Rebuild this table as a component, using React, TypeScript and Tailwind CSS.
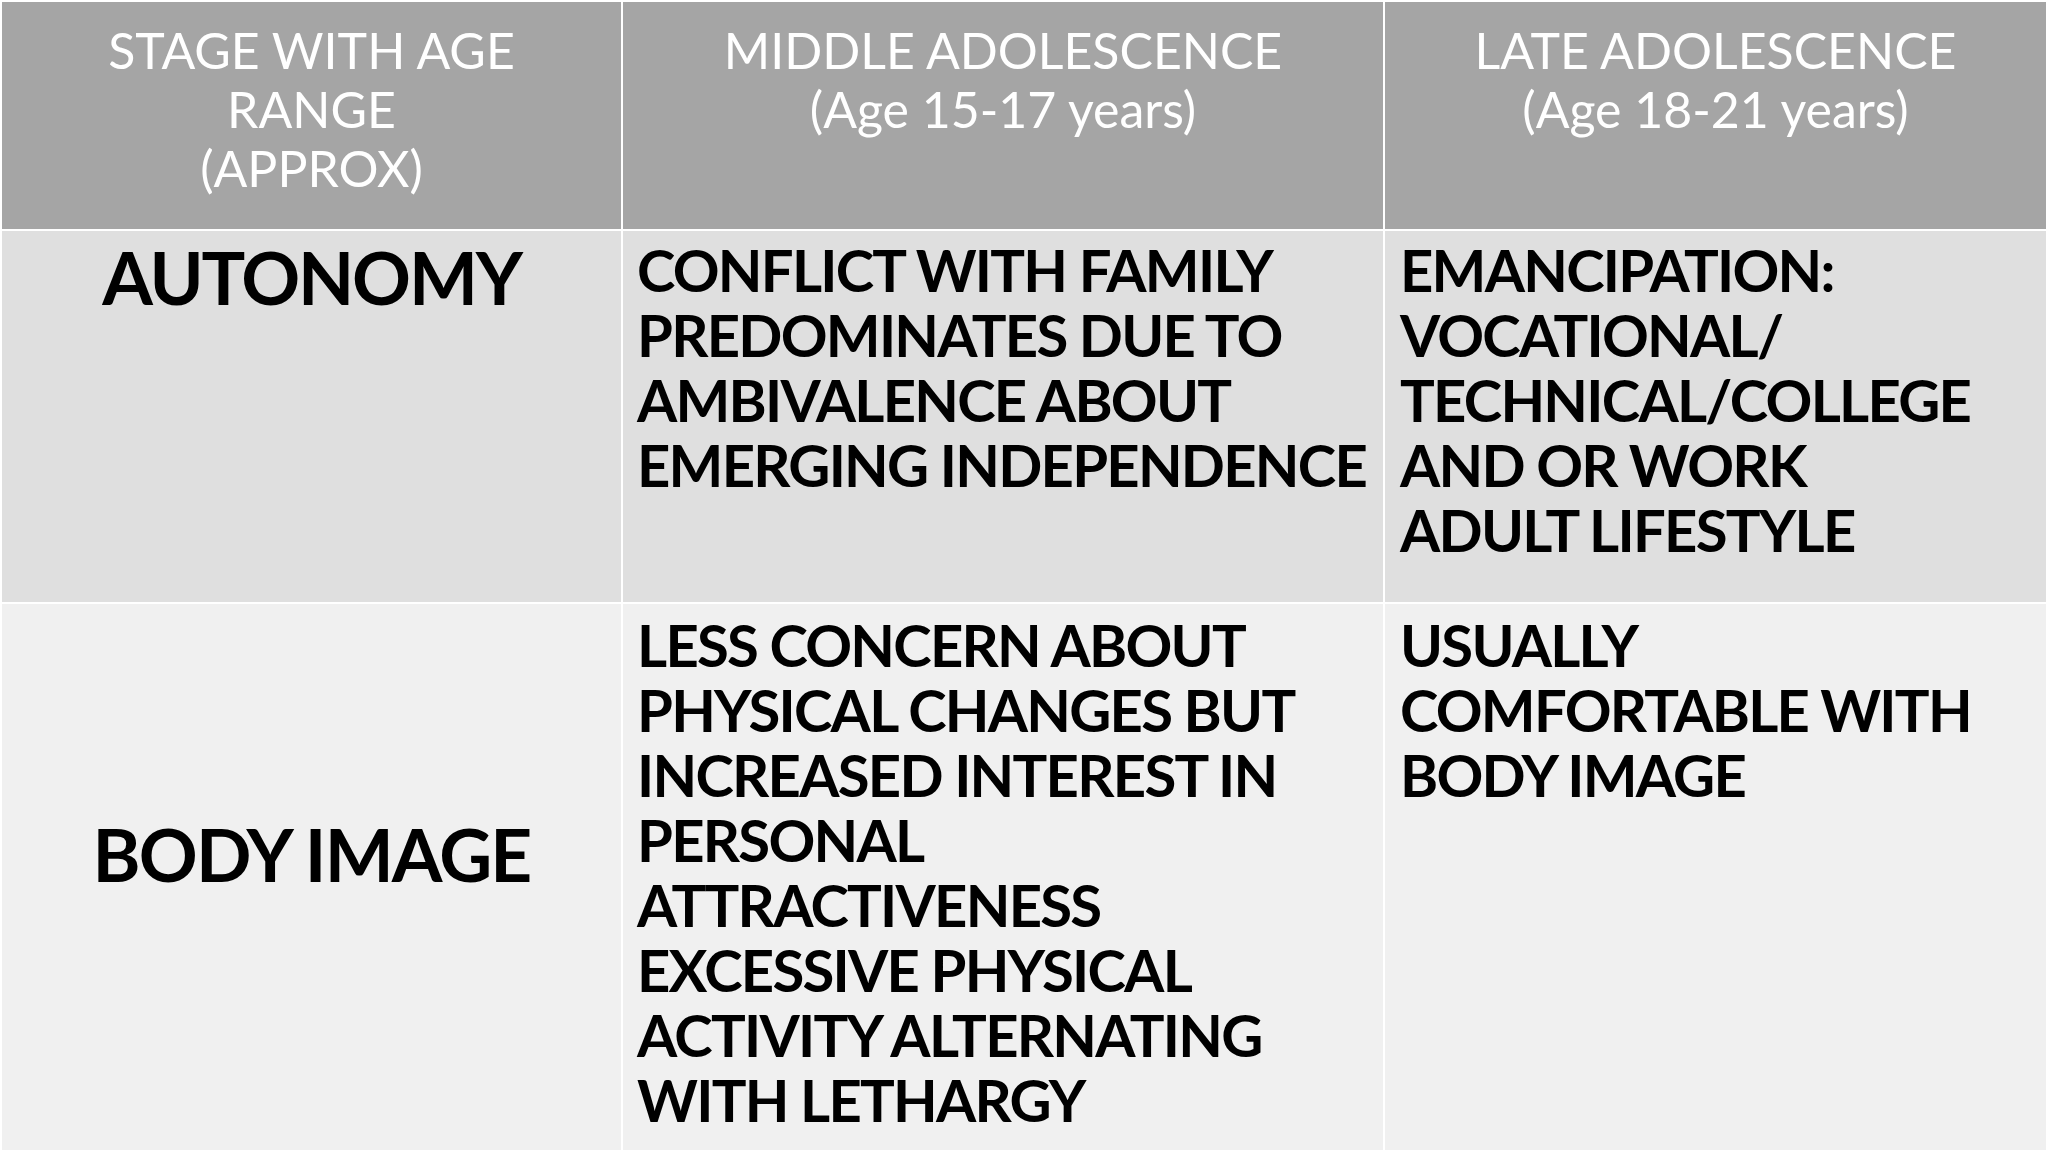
import React from 'react'

// Adolescence stages table (middle vs late)

const headers = [
  ['STAGE WITH AGE', 'RANGE', '(APPROX)'],
  ['MIDDLE ADOLESCENCE', '(Age 15-17 years)'],
  ['LATE ADOLESCENCE', '(Age 18-21 years)'],
]

const rows = [
  {
    label: 'AUTONOMY',
    middle: [
      'CONFLICT WITH FAMILY',
      'PREDOMINATES DUE TO',
      'AMBIVALENCE ABOUT',
      'EMERGING INDEPENDENCE',
    ],
    late: [
      'EMANCIPATION:',
      'VOCATIONAL/',
      'TECHNICAL/COLLEGE',
      'AND OR WORK',
      'ADULT LIFESTYLE',
    ],
  },
  {
    label: 'BODY IMAGE',
    middle: [
      'LESS CONCERN ABOUT',
      'PHYSICAL CHANGES BUT',
      'INCREASED INTEREST IN',
      'PERSONAL',
      'ATTRACTIVENESS',
      'EXCESSIVE PHYSICAL',
      'ACTIVITY ALTERNATING',
      'WITH LETHARGY',
    ],
    late: ['USUALLY', 'COMFORTABLE WITH', 'BODY IMAGE'],
  },
]

function Lines({ lines }: { lines: string[] }) {
  return (
    <>
      {lines.map((l, i) => (
        <div key={i} className="whitespace-nowrap">
          {l}
        </div>
      ))}
    </>
  )
}

export default function App() {
  return (
    <div
      className="h-[1152px] w-[2048px] overflow-hidden bg-white p-[2px]"
      style={{ fontFamily: 'Lato, "Open Sans", sans-serif' }}
    >
      <div className="grid h-full grid-cols-[619px_760px_1fr] grid-rows-[227px_371px_1fr] gap-[2px]">
        {/* header */}
        {headers.map((h, i) => (
          <div
            key={i}
            className="bg-[#a5a5a5] pt-[19px] text-center text-[50px] font-normal leading-[59px] text-white"
          >
            <Lines lines={h} />
          </div>
        ))}

        {/* autonomy */}
        <div className="bg-[#dfdfdf] pt-[10px] text-center text-[73px] font-bold leading-[73px] tracking-[-0.03em] text-black">
          {rows[0].label}
        </div>
        <div className="bg-[#dfdfdf] pl-[14px] pt-[6px] text-[58px] font-bold leading-[65px] tracking-[-0.03em] text-black">
          <Lines lines={rows[0].middle} />
        </div>
        <div className="bg-[#dfdfdf] pl-[15px] pt-[6px] text-[58px] font-bold leading-[65px] tracking-[-0.03em] text-black">
          <Lines lines={rows[0].late} />
        </div>

        {/* body image */}
        <div className="flex items-center justify-center bg-[#f0f0f0] pb-[46px] text-[73px] font-bold leading-[73px] tracking-[-0.025em] text-black">
          {rows[1].label}
        </div>
        <div className="bg-[#f0f0f0] pl-[14px] pt-[8px] text-[58px] font-bold leading-[65px] tracking-[-0.03em] text-black">
          <Lines lines={rows[1].middle} />
        </div>
        <div className="bg-[#f0f0f0] pl-[15px] pt-[8px] text-[58px] font-bold leading-[65px] tracking-[-0.03em] text-black">
          <Lines lines={rows[1].late} />
        </div>
      </div>
    </div>
  )
}
